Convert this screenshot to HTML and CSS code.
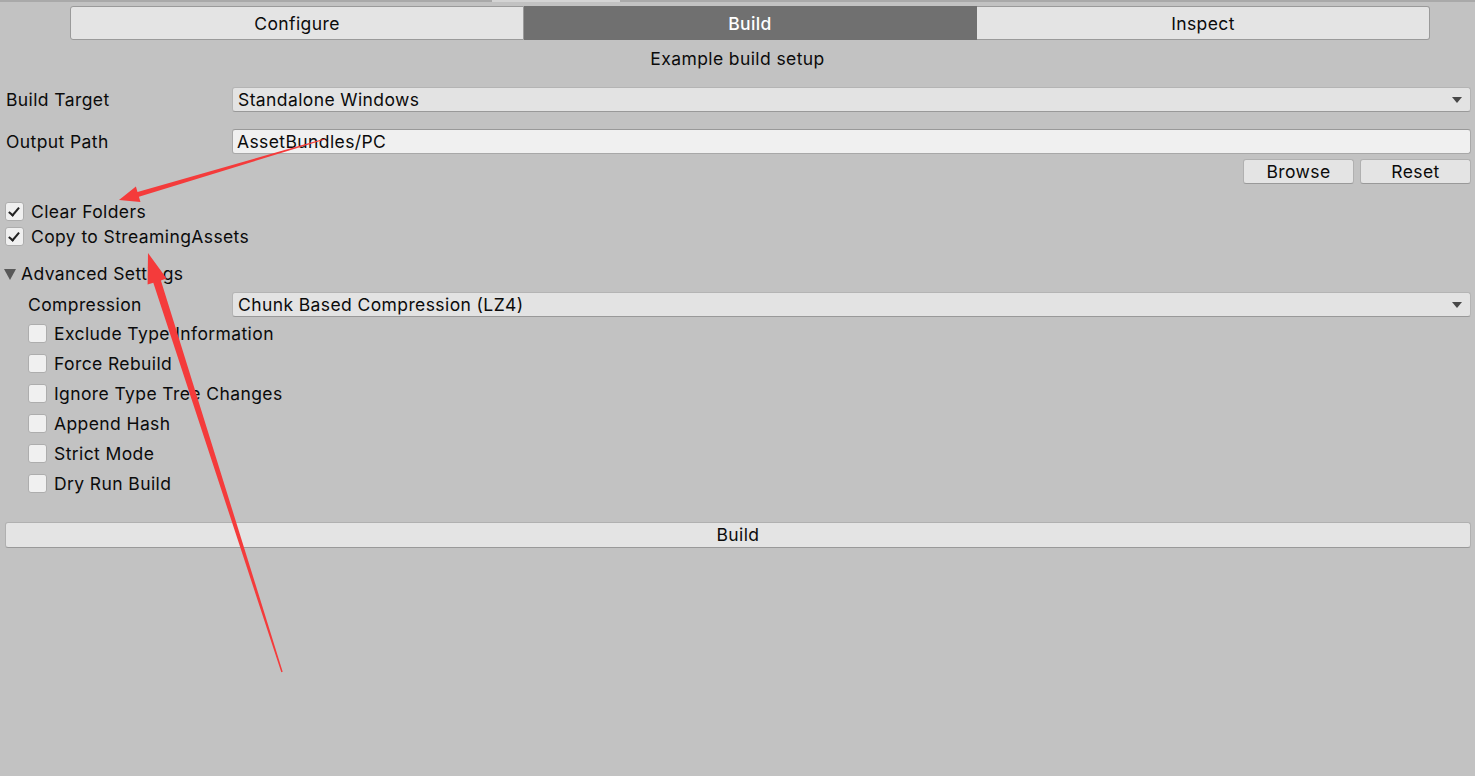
FILE: index.html
```html
<!DOCTYPE html>
<html lang="en">
<head>
    <meta charset="UTF-8">
    <meta name="viewport" content="width=device-width, initial-scale=1.0">
    <title>Build</title>
    <link rel="stylesheet" href="styles.css">
</head>
<body>
    <div class="topbar"><span class="topbar-hi"></span></div>
    <div class="tabs">
        <div class="tab">Configure</div>
        <div class="tab active">Build</div>
        <div class="tab">Inspect</div>
    </div>
    <div class="subtitle">Example build setup</div>

    <div class="field first">
        <div class="label">Build Target</div>
        <div class="dropdown">Standalone Windows<span class="caret"></span></div>
    </div>
    <div class="field second">
        <div class="label">Output Path</div>
        <div class="textbox">AssetBundles/PC</div>
    </div>
    <div class="buttons">
        <div class="btn">Browse</div>
        <div class="btn">Reset</div>
    </div>

    <div class="toggle top"><span class="check on"></span>Clear Folders</div>
    <div class="toggle"><span class="check on"></span>Copy to StreamingAssets</div>

    <div class="foldout"><span class="tri"></span>Advanced Settings</div>
    <div class="field sub">
        <div class="label indent">Compression</div>
        <div class="dropdown">Chunk Based Compression (LZ4)<span class="caret"></span></div>
    </div>
    <div class="options">
        <div class="opt"><span class="check"></span>Exclude Type Information</div>
        <div class="opt"><span class="check"></span>Force Rebuild</div>
        <div class="opt"><span class="check"></span>Ignore Type Tree Changes</div>
        <div class="opt"><span class="check"></span>Append Hash</div>
        <div class="opt"><span class="check"></span>Strict Mode</div>
        <div class="opt"><span class="check"></span>Dry Run Build</div>
    </div>

    <div class="build-btn">Build</div>

    <!-- annotation arrows drawn over the screenshot -->
    <svg class="marks" width="1475" height="776" viewBox="0 0 1475 776">
        <polygon points="325,138.5 137.5,191.9 135.9,186.6 119,200 140.5,202 138.9,196.7 325,139.5" fill="#f43b3b"/>
        <polygon points="282.7,671.8 160.9,280.4 166.6,278.6 148,253 147.6,284.6 153.3,282.8 281.3,672.2" fill="#f43b3b"/>
    </svg>
</body>
</html>
```

FILE: styles.css
```css
body {
  margin: 0;
  background: #c2c2c2;
  font-family: Inter, "Noto Sans", sans-serif;
  font-size: 17.5px;
  letter-spacing: 0.4px;
  color: #0b0b0b;
  position: relative;
  height: 776px;
  overflow: hidden;
}
.topbar {
  height: 2px;
  background: #a9a9a9;
}
.topbar-hi {
  display: block;
  margin-left: 492px;
  width: 128px;
  height: 2px;
  background: #d4d4d4;
}
.tabs {
  display: flex;
  margin: 4px 0 0 70px;
  width: 1360px;
  height: 34px;
}
.tab {
  flex: 1;
  box-sizing: border-box;
  background: #e4e4e4;
  border: 1px solid #9a9a9a;
  border-left: 0;
  text-align: center;
  line-height: 34px;
}
.tab:first-child {
  border-left: 1px solid #9a9a9a;
  border-radius: 3px 0 0 3px;
}
.tab:last-child {
  border-radius: 0 3px 3px 0;
}
.tab.active {
  background: #707070;
  border-color: #707070;
  color: #fff;
  font-weight: 500;
}
.subtitle {
  height: 38px;
  line-height: 38px;
  text-align: center;
}
.field {
  display: flex;
  align-items: center;
  height: 25px;
  padding: 0 4px 0 6px;
}
.field.first { margin-top: 9px; }
.field.second { margin-top: 17px; }
.field.sub { margin-top: 6px; }
.label {
  width: 226px;
  flex: none;
}
.label.indent {
  padding-left: 22px;
  box-sizing: border-box;
}
.dropdown, .textbox {
  flex: 1;
  box-sizing: border-box;
  height: 25px;
  line-height: 23px;
  border-radius: 3px;
  position: relative;
}
.dropdown {
  background: #e3e3e3;
  border: 1px solid #b4b4b4;
  border-bottom-color: #999;
  padding-left: 5px;
}
.textbox {
  background: #f0f0f0;
  border: 1px solid #a8a8a8;
  border-top-color: #999;
  padding-left: 4px;
}
.caret {
  position: absolute;
  right: 8px;
  top: 9px;
  border-left: 5px solid transparent;
  border-right: 5px solid transparent;
  border-top: 6px solid #484848;
}
.buttons {
  display: flex;
  justify-content: flex-end;
  gap: 6px;
  margin-top: 5px;
  padding-right: 4px;
}
.btn {
  box-sizing: border-box;
  width: 111px;
  height: 25px;
  line-height: 24px;
  text-align: center;
  background: #e4e4e4;
  border: 1px solid #b0b0b0;
  border-bottom-color: #999;
  border-radius: 3px;
}
.toggle {
  display: flex;
  align-items: center;
  height: 25px;
  padding-left: 5px;
}
.toggle.top { margin-top: 15px; }
.check {
  box-sizing: border-box;
  width: 19px;
  height: 19px;
  margin-right: 7px;
  background: #f0f0f0;
  border: 1px solid #adadad;
  border-radius: 3px;
  position: relative;
  flex: none;
}
.check.on::after {
  content: "";
  position: absolute;
  left: 5px;
  top: 2px;
  width: 4px;
  height: 9px;
  border-right: 2px solid #222;
  border-bottom: 2px solid #222;
  transform: rotate(40deg);
}
.foldout {
  display: flex;
  align-items: center;
  height: 25px;
  margin-top: 12px;
  padding-left: 4px;
}
.tri {
  border-left: 6px solid transparent;
  border-right: 6px solid transparent;
  border-top: 11px solid #595959;
  margin-right: 5px;
  margin-top: 1px;
}
.options {
  margin-top: 1px;
  padding-left: 28px;
}
.opt {
  display: flex;
  align-items: center;
  height: 30px;
}
.build-btn {
  box-sizing: border-box;
  margin: 24px 4px 0 5px;
  height: 26px;
  line-height: 24px;
  text-align: center;
  background: #e4e4e4;
  border: 1px solid #b0b0b0;
  border-bottom-color: #999;
  border-radius: 3px;
}
.marks {
  position: absolute;
  left: 0;
  top: 0;
  pointer-events: none;
}
```
